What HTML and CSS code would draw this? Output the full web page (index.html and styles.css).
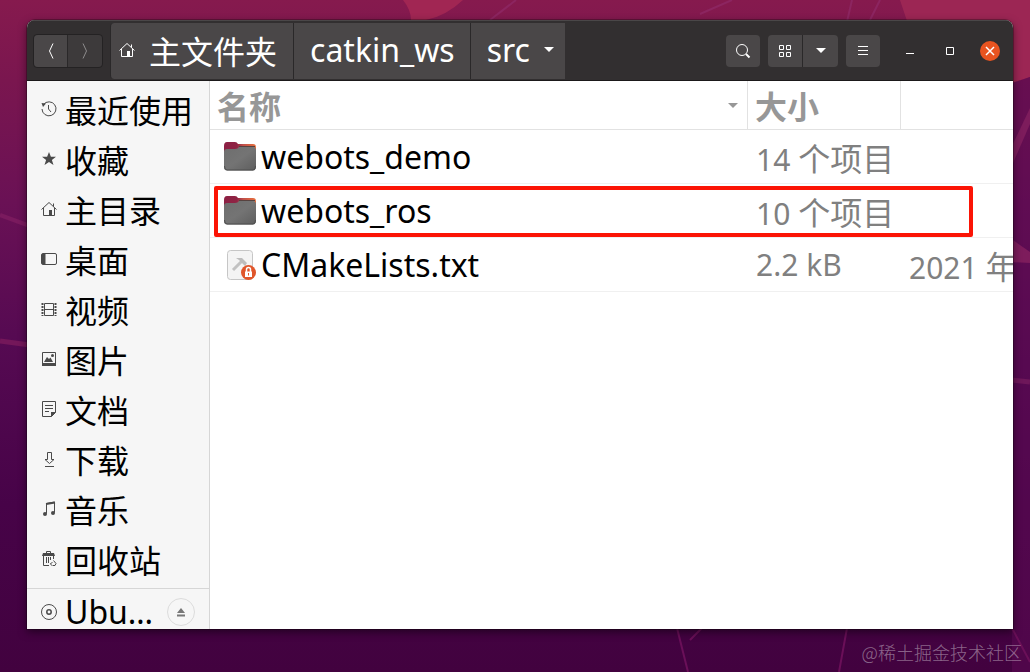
FILE: index.html
```html
<!DOCTYPE html>
<html lang="zh-CN">
<head>
  <meta charset="UTF-8">
  <meta name="viewport" content="width=device-width, initial-scale=1.0">
  <title>src</title>
  <link rel="stylesheet" href="styles.css">
</head>
<body>
  <!-- 桌面壁纸 -->
  <svg class="wallpaper" viewBox="0 0 1030 672" preserveAspectRatio="none" aria-hidden="true">
    <path d="M403 0H463Q446 16 426 20H411Q411 10 403 0Z" fill="#a12653"/>
    <path d="M900 0H1030V77L1012 83L910 30Z" fill="#9c2654"/>
    <path d="M1012 83L1030 77V672H1012Z" fill="#5a0a52" opacity=".6"/>
    <path d="M1010 150L1030 108V124L1010 170Z" fill="#7d1c5c"/>
    <path d="M1010 238L1030 252V263L1010 262Z" fill="#7d1c5c"/>
    <g fill="none" stroke="#8c2560" stroke-width="2">
      <path d="M490 20L516 0M700 14L732 0M846 26L852 0M870 20L880 0"/>
      <path d="M0 215L30 226" stroke="#7a1a5e" stroke-width="4"/>
      <path d="M0 341L30 345" stroke="#74175a" stroke-width="5"/>
      <path d="M1012 380L1030 382" stroke="#6e175a" stroke-width="5"/>
      <path d="M677 628L688 672M690 640L702 628M847 628L839 672M1012 628L1030 662" stroke="#6a0f58"/>
    </g>
  </svg>

  <div class="window">
    <div class="header">
      <div class="btn-group nav">
        <button aria-label="后退"><svg width="16" height="16" viewBox="0 0 16 16"><path d="M10 .5L6.500 8L10 15.500"/></svg></button>
        <button aria-label="前进" disabled><svg width="16" height="16" viewBox="0 0 16 16"><path d="M6 .5L9.500 8L6 15.500"/></svg></button>
      </div>
      <div class="path-bar">
        <button class="path-home">
          <svg width="16" height="16" viewBox="0 0 16 16"><path d="M.5 8.500L8 1.500L15.500 8.500M12.500 2.500V5.500M2.500 7V14.500H13.500V7"/><path class="solid" d="M8 9H11V15H8Z"/></svg>
          <span class="cjk">主文件夹</span>
        </button>
        <button>catkin_ws</button>
        <button class="path-current">src <span class="arrow"></span></button>
      </div>
      <div class="tools">
        <button aria-label="搜索"><svg width="16" height="16" viewBox="0 0 16 16"><circle cx="7" cy="7" r="5.500"/><path d="M11 11L14.500 14.500" stroke-width="2"/></svg></button>
        <div class="btn-group">
          <button aria-label="图标视图"><svg width="16" height="16" viewBox="0 0 16 16"><path d="M2.500 2.500H6.500V6.500H2.500ZM9.500 2.500H13.500V6.500H9.500ZM2.500 9.500H6.500V13.500H2.500ZM9.500 9.500H13.500V13.500H9.500Z"/></svg></button>
          <button aria-label="视图选项"><span class="arrow"></span></button>
        </div>
        <button aria-label="菜单"><svg width="16" height="16" viewBox="0 0 16 16"><path d="M3 3.500H13M3 7.500H13M3 11.500H13"/></svg></button>
      </div>
      <div class="window-controls">
        <button aria-label="最小化"><svg width="16" height="16" viewBox="0 0 16 16"><path d="M4 10.500H12"/></svg></button>
        <button aria-label="最大化"><svg width="16" height="16" viewBox="0 0 16 16"><path d="M4.500 4.500H11.500V11.500H4.500Z"/></svg></button>
        <button class="close" aria-label="关闭"><svg width="16" height="16" viewBox="0 0 16 16"><path d="M4 4L12 12M12 4L4 12" stroke-width="1.500"/></svg></button>
      </div>
    </div>

    <div class="content">
      <div class="sidebar">
        <ul class="places">
          <li><a href="#"><svg width="16" height="16" viewBox="0 0 16 16"><path d="M2.500 3.500A7 7 0 1 1 1 8M7.500 4V8L10 11"/><path class="solid" d="M.5 2L5 2.500L2 6Z"/></svg>最近使用</a></li>
          <li><a href="#"><svg width="16" height="16" viewBox="0 0 16 16"><path class="solid" d="M8 1L9.900 5.800H15L10.900 8.900L12.500 14L8 10.900L3.500 14L5.100 8.900L1 5.800H6.100Z"/></svg>收藏</a></li>
          <li><a href="#"><svg width="16" height="16" viewBox="0 0 16 16"><path d="M.5 8.500L8 1.500L15.500 8.500M12.500 2.500V5.500M2.500 7V14.500H13.500V7"/><path class="solid" d="M8 9H11V15H8Z"/></svg>主目录</a></li>
          <li><a href="#"><svg width="16" height="16" viewBox="0 0 16 16"><rect x=".5" y="2.500" width="15" height="11" rx="1.500"/><path class="solid" d="M1 3H4.500V13H1Z"/></svg>桌面</a></li>
          <li><a href="#"><svg width="16" height="16" viewBox="0 0 16 16"><path d="M3.500 2.500H12.500V14.500H3.500ZM3.500 8.500H12.500"/><path d="M1.500 2V15M14.500 2V15" stroke-width="2" stroke-dasharray="2 1"/></svg>视频</a></li>
          <li><a href="#"><svg width="16" height="16" viewBox="0 0 16 16"><path d="M1.500 1.500H14.500V13.500H1.500Z"/><path class="solid" d="M1 12H15V15H1ZM3 11L6 6L8 8L9.500 6.500L12 11Z"/><circle class="solid" cx="11.500" cy="4.500" r="1.500"/></svg>图片</a></li>
          <li><a href="#"><svg width="16" height="16" viewBox="0 0 16 16"><path d="M1.500 .5H14.500V11.500L10.500 15.500H1.500ZM4 4.500H12M4 7.500H12M4 10.500H8"/><path class="solid" d="M10 11H15L10 16Z"/></svg>文档</a></li>
          <li><a href="#"><svg width="16" height="16" viewBox="0 0 16 16"><path d="M6.500 1.500H10.500V8.500H13L8.500 12.500L4 8.500H6.500ZM4 15.500H13"/></svg>下载</a></li>
          <li><a href="#"><svg width="16" height="16" viewBox="0 0 16 16"><path d="M5.500 12.500V2.500L13.500 1V11.500"/><path d="M5 3L14 1.500" stroke-width="2"/><circle class="solid" cx="4" cy="13" r="2"/><circle class="solid" cx="12" cy="12" r="2"/></svg>音乐</a></li>
          <li><a href="#"><svg width="16" height="16" viewBox="0 0 16 16"><path d="M5.500 2V.5H9.500V2M2.500 5V14.500H8M12.500 5V8M5.500 6V12M7.500 6V12M9.500 6V9"/><path class="solid" d="M1 5L2 2H13L14 5Z"/><path d="M10.500 14.500L9.500 12.500L11.500 11.500M12.500 9.500L15 12.500L14 14.500H11.500"/></svg>回收站</a></li>
        </ul>
        <div class="device">
          <a href="#"><svg width="16" height="16" viewBox="0 0 16 16"><circle cx="8" cy="8" r="7.500"/><circle cx="8" cy="8" r="2.200" stroke-width="1.500"/></svg>Ubu…</a>
          <button class="eject" aria-label="弹出"><svg width="16" height="16" viewBox="0 0 16 16"><path class="solid" d="M8 4L12 9H4ZM4 10.500H12V12.500H4Z"/></svg></button>
        </div>
      </div>

      <div class="main">
        <table class="file-list">
          <colgroup>
            <col>
            <col class="col-size">
            <col class="col-date">
          </colgroup>
          <thead>
            <tr>
              <th><div class="head-cell">名称 <span class="arrow"></span></div></th>
              <th>大小</th>
              <th></th>
            </tr>
          </thead>
          <tbody>
            <tr>
              <td><div class="file-name"><svg width="34" height="32" viewBox="0 0 34 32"><use href="#folder"/></svg>webots_demo</div></td>
              <td class="items">14 <span class="cjk">个项目</span></td>
              <td></td>
            </tr>
            <tr class="marked">
              <td><div class="file-name"><svg width="34" height="32" viewBox="0 0 34 32"><use href="#folder"/></svg>webots_ros</div></td>
              <td class="items">10 <span class="cjk">个项目</span></td>
              <td></td>
            </tr>
            <tr>
              <td>
                <div class="file-name">
                  <svg width="34" height="32" viewBox="0 0 34 32">
                    <rect x="4.500" y="1.500" width="25" height="29" rx="3" fill="#f4f4f4" stroke="#c6c6c6"/>
                    <path d="M10 21L19 12" stroke="#c2c2c2" stroke-width="3"/>
                    <path d="M13 9H19L24 14L22 17L16 11Z" fill="#bdbdbd"/>
                    <circle cx="25.500" cy="23.500" r="7.500" fill="#e0562b"/>
                    <path d="M23.500 23V20.500A2 2 0 0 1 27.500 20.500V23" fill="none" stroke="#fff" stroke-width="1.500"/>
                    <path d="M22 22.500H29V28H22Z" fill="#fff"/>
                    <path d="M25.500 24V26.500" stroke="#e0562b"/>
                  </svg>CMakeLists.txt
                </div>
              </td>
              <td>2.2 kB</td>
              <td class="items">2021 <span class="cjk">年</span></td>
            </tr>
          </tbody>
        </table>
      </div>
    </div>
  </div>

  <div class="watermark">@稀土掘金技术社区</div>

  <!-- 文件夹图标 -->
  <svg class="defs" width="0" height="0" aria-hidden="true">
    <defs>
      <linearGradient id="tab">
        <stop offset="0" stop-color="#8c2044"/>
        <stop offset=".4" stop-color="#8f2444"/>
        <stop offset=".6" stop-color="#c0504a"/>
        <stop offset="1" stop-color="#e9703c"/>
      </linearGradient>
      <linearGradient id="front" x1="0" y1="0" x2="1" y2="1">
        <stop offset="0" stop-color="#6e6e6e"/>
        <stop offset=".5" stop-color="#747474"/>
        <stop offset="1" stop-color="#5e5e5e"/>
      </linearGradient>
      <g id="folder">
        <path d="M1 5Q1 1 4 1H12Q14 1 15 3H30Q33 3 33 6V12H1Z" fill="url(#tab)"/>
        <path d="M16 5.500H32" stroke="#57423f"/>
        <path d="M1 11Q1 8 4 8H12Q15 8 16 6H30Q33 6 33 9V26Q33 29.500 30 29.500H4Q1 29.500 1 26Z" fill="url(#front)"/>
        <path d="M1.500 25Q1.500 29 4 29H30Q32.500 29 32.500 25" fill="none" stroke="#4f4f4f"/>
      </g>
    </defs>
  </svg>
</body>
</html>
```
FILE: styles.css
```css
* {
  box-sizing: border-box;
}
body {
  margin: 0;
  height: 100vh;
  padding: 20px 17px 43px 27px;
  overflow: hidden;
  font-family: "Noto Sans", "Noto Sans CJK SC", sans-serif;
  font-size: 32px;
  background: linear-gradient(#861a4e 0%, #7a164f 12%, #6a1155 30%, #560a52 50%, #470348 75%, #42023f 100%);
}
button {
  margin: 0;
  padding: 0;
  border: none;
  background: none;
  font: inherit;
  color: inherit;
}
svg {
  flex: none;
  fill: none;
  stroke: currentColor;
}
.solid {
  fill: currentColor;
  stroke: none;
}
.cjk {
  font-family: "Noto Sans CJK SC", sans-serif;
  font-size: 32px;
}
.arrow {
  border: 5px solid transparent;
  border-top-color: currentColor;
  border-bottom: none;
}
.wallpaper {
  position: absolute;
  top: 0;
  left: 0;
  width: 100%;
  height: 100%;
  stroke: none;
}
.defs {
  position: absolute;
}
.window {
  position: relative;
  height: 100%;
  display: flex;
  flex-direction: column;
  overflow: hidden;
  border-radius: 8px 8px 0 0;
  background: #fff;
  box-shadow: 0 3px 9px rgba(0,0,0,0.5), 0 0 0 1px rgba(0,0,0,0.25);
}

/* 标题栏 */
.header {
  flex: none;
  height: 61px;
  padding: 0 13px 0 6px;
  display: flex;
  align-items: center;
  background: #322f30;
  border-top: 1px solid #4a4748;
  border-bottom: 1px solid #1b191a;
  color: #fff;
}
.btn-group {
  display: flex;
}
.btn-group button,
.tools > button {
  width: 34px;
  height: 32px;
  display: flex;
  align-items: center;
  justify-content: center;
  background: #4a4748;
  border-radius: 4px;
}
.btn-group button:first-child {
  border-radius: 4px 0 0 4px;
  border-right: 1px solid #2a2829;
}
.btn-group button:last-child {
  border-radius: 0 4px 4px 0;
}
.nav {
  border: 1px solid #242223;
  border-radius: 4px;
}
.nav button:disabled {
  background: #3d3a3b;
  color: #8e8c8d;
}
.path-bar {
  margin-left: 7px;
  height: 56px;
  display: flex;
}
.path-bar button {
  display: flex;
  align-items: center;
  padding: 0 15px 2px 16px;
  background: #4a4748;
  border-left: 1px solid #2a2829;
}
.path-bar button:first-child {
  border-radius: 4px 0 0 4px;
}
.path-bar .path-home {
  padding: 0 16px 2px 8px;
  gap: 14px;
}
.path-bar .path-current {
  padding-right: 11px;
  gap: 14px;
}
.tools {
  margin-left: auto;
  display: flex;
  gap: 8px;
}
.tools .btn-group button {
  width: 35px;
}
.window-controls {
  margin-left: 20px;
  display: flex;
  gap: 20px;
}
.window-controls button {
  width: 20px;
  height: 20px;
  display: flex;
  align-items: center;
  justify-content: center;
  border-radius: 50%;
}
.window-controls .close {
  background: #e95420;
}

/* 侧边栏 */
.content {
  flex: 1;
  min-height: 0;
  display: flex;
}
.sidebar {
  flex: none;
  width: 183px;
  padding-top: 3px;
  overflow: hidden;
  background: #f6f6f6;
  border-right: 1px solid #d6d6d6;
}
.places {
  list-style: none;
  margin: 0;
  padding: 0;
}
.sidebar a {
  height: 50px;
  padding-left: 14px;
  display: flex;
  align-items: center;
  gap: 8px;
  color: #000;
  text-decoration: none;
}
.places a {
  font-family: "Noto Sans CJK SC", sans-serif;
  font-size: 32px;
}
.sidebar svg {
  color: #4a4a4a;
}
.device {
  margin-top: 4px;
  padding-right: 14px;
  display: flex;
  align-items: center;
  justify-content: space-between;
  border-top: 1px solid #d6d6d6;
}
.device a {
  height: 46px;
  line-height: 32px;
}
.eject {
  width: 28px;
  height: 28px;
  display: flex;
  align-items: center;
  justify-content: center;
  border: 1px solid #dcdcdc;
  border-radius: 50%;
}
.sidebar .eject svg {
  color: #777;
}

/* 文件列表 */
.main {
  flex: 1;
  min-width: 0;
  overflow: hidden;
}
.file-list {
  width: 100%;
  table-layout: fixed;
  border-collapse: separate;
  border-spacing: 0;
}
.col-size {
  width: 153px;
}
.col-date {
  width: 112px;
}
.file-list th {
  height: 49px;
  padding: 0 7px;
  font-family: "Noto Sans CJK SC", sans-serif;
  font-size: 32px;
  line-height: 48px;
  text-align: left;
  color: #979797;
  border-right: 1px solid #e2e2e2;
  border-bottom: 1px solid #e2e2e2;
}
.file-list th:last-child {
  border-right: none;
}
.head-cell {
  padding-right: 2px;
  display: flex;
  align-items: center;
  justify-content: space-between;
}
.file-list td {
  height: 54px;
  padding: 0 8px;
  font-size: 30px;
  line-height: 44px;
  white-space: nowrap;
  color: #808080;
  border-bottom: 1px solid #f0f0f0;
}
.file-list .items {
  padding-top: 4px;
}
.file-name {
  padding-left: 5px;
  display: flex;
  align-items: center;
  gap: 4px;
  font-size: 32px;
  color: #000;
}
.file-name svg {
  stroke: none;
}
.marked {
  position: relative;
}
.marked td:first-child::after {
  content: "";
  position: absolute;
  top: 2px;
  right: 40px;
  bottom: 1px;
  left: 4px;
  border: 4px solid #fb1405;
  border-radius: 2px;
}
.watermark {
  position: absolute;
  right: 8px;
  bottom: 7px;
  font-family: "Noto Sans CJK SC", sans-serif;
  font-size: 18px;
  font-weight: 300;
  color: rgba(255,255,255,0.4);
}
```
